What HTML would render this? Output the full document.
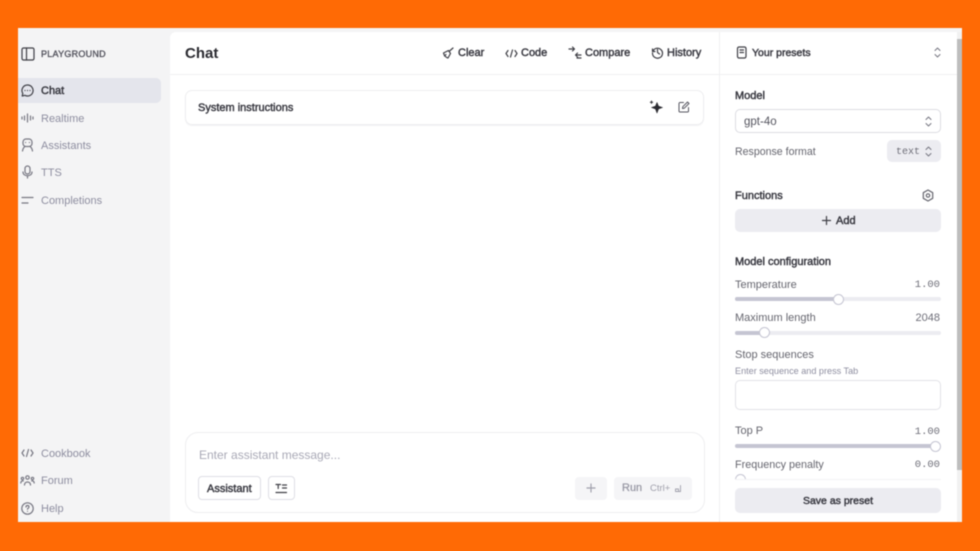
<!DOCTYPE html>
<html><head><meta charset="utf-8"><style>
html,body{margin:0;padding:0;width:980px;height:551px;overflow:hidden;background:#ff6a05}
*{box-sizing:border-box}
#f{position:absolute;left:0;top:0;width:980px;height:551px;font-family:"Liberation Sans",sans-serif;filter:blur(.4px)}
.a,.t,svg{position:absolute}
.t{white-space:nowrap;line-height:16px;height:16px;font-size:11px;color:#66666f;margin-top:1px}
.n{font-size:11px;color:#8e8ea0}
.b{color:#3a3a42;font-size:11px;-webkit-text-stroke:.45px #3a3a42}
.m{font-family:"Liberation Mono",monospace;font-size:10.5px;color:#6e6e78}
svg{fill:none;stroke:#55555f;stroke-width:1.2;stroke-linecap:round;stroke-linejoin:round}
.r{text-align:right}
.track{position:absolute;left:735px;width:206px;height:4px;border-radius:2px;background:#ececf1}
.fill{position:absolute;left:735px;height:4px;border-radius:2px;background:#c5c5d2}
.th{position:absolute;width:11px;height:11px;border-radius:50%;background:#fff;border:1.5px solid #c5c5d2}
</style></head><body><div id="f">
<div class="a" style="left:18px;top:28px;width:944px;height:494px;background:#f4f4f5"></div>
<div class="a" style="left:170px;top:32px;width:787px;height:490px;background:#fff;border-top-left-radius:6px"></div>
<div class="a" style="left:957px;top:32px;width:5px;height:490px;background:#f1f1f1"></div>
<div class="a" style="left:957px;top:39px;width:5px;height:431px;background:#bdbdbd"></div>
<div class="a" style="left:170px;top:74px;width:787px;height:1px;background:#f0f0f2"></div>
<div class="a" style="left:719px;top:32px;width:1px;height:490px;background:#efeff1"></div>

<!-- sidebar -->
<svg style="left:21px;top:47px" width="14" height="14" viewBox="0 0 14 14"><rect x="1" y="1" width="12" height="12" rx="1.5" stroke="#3f3f46"/><path d="M5.5 1v12" stroke="#3f3f46"/></svg>
<div class="t b" style="left:41px;top:45px;font-size:9px;letter-spacing:.25px;color:#55555f;-webkit-text-stroke:.35px #55555f">PLAYGROUND</div>
<div class="a" style="left:18px;top:78px;width:143px;height:25px;background:#e4e5ec;border-radius:0 5px 5px 0"></div>
<svg style="left:21px;top:84px" width="13" height="13" viewBox="0 0 13 13"><path d="M6.500 1a5.500 5.500 0 1 1-2.600 10.300L1.200 12l.6-2.600A5.500 5.500 0 0 1 6.500 1z" stroke="#3f3f46"/><path d="M4 6.500h.01M6.500 6.500h.01M9 6.500h.01" stroke="#3f3f46"/></svg>
<div class="t b" style="left:41px;top:82px">Chat</div>
<svg style="left:21px;top:112px" width="13" height="12" viewBox="0 0 13 12"><path d="M1 5v2M3.500 4v4M6.500 2v8M9.500 4v4M12 5v2" stroke="#777782"/></svg>
<div class="t n" style="left:41px;top:110px">Realtime</div>
<svg style="left:21px;top:138px" width="13" height="14" viewBox="0 0 13 14"><rect x="2" y="1" width="9" height="7.500" rx="3" stroke="#777782"/><path d="M4.600 4.500h.01M8.400 4.500h.01M1.500 13c.3-2.600 2-4.500 2.700-4.500M11.500 13c-.3-2.600-2-4.500-2.700-4.500" stroke="#777782"/></svg>
<div class="t n" style="left:41px;top:137px">Assistants</div>
<svg style="left:21px;top:165px" width="13" height="14" viewBox="0 0 13 14"><rect x="4" y="1" width="5" height="8" rx="2.500" stroke="#777782"/><path d="M2 7c0 5 9 5 9 0M6.500 11v2" stroke="#777782"/></svg>
<div class="t n" style="left:41px;top:164px">TTS</div>
<svg style="left:21px;top:196px" width="13" height="9" viewBox="0 0 13 9"><path d="M1 1.500h11M1 7h6" stroke="#777782"/></svg>
<div class="t n" style="left:41px;top:192px">Completions</div>
<svg style="left:21px;top:448px" width="13" height="10" viewBox="0 0 13 10"><path d="M3 2L1 5l2 3M10 2l2 3-2 3M7.500 1.500l-2 7" stroke="#777782"/></svg>
<div class="t n" style="left:41px;top:445px">Cookbook</div>
<svg style="left:20px;top:475px" width="15" height="11" viewBox="0 0 15 11"><circle cx="7.500" cy="2.500" r="1.700" stroke="#777782"/><circle cx="2.500" cy="3.500" r="1.200" stroke="#777782"/><circle cx="12.500" cy="3.500" r="1.200" stroke="#777782"/><path d="M4.500 10c0-4 6-4 6 0M.8 8c0-2 2-2.500 2.500-2M14.200 8c0-2-2-2.500-2.500-2" stroke="#777782"/></svg>
<div class="t n" style="left:41px;top:472px">Forum</div>
<svg style="left:21px;top:502px" width="13" height="13" viewBox="0 0 13 13"><circle cx="6.500" cy="6.500" r="5.700" stroke="#777782"/><path d="M5 5c0-2 3-2 3 0 0 1-1.500 1.200-1.500 2.200M6.500 9.300h.01" stroke="#777782"/></svg>
<div class="t n" style="left:41px;top:500px">Help</div>

<!-- header -->
<div class="t" style="left:185px;top:44px;height:18px;line-height:18px;font-size:15px;font-weight:bold;color:#2b2b31">Chat</div>
<svg style="left:442px;top:47px" width="12" height="12" viewBox="0 0 12 12"><path d="M11 1L7 4.500M1.500 6L6.500 3.500 8.500 6.500 6 11C4 10.500 2 8.500 1.500 6zM2.500 9L4 7.500" stroke="#3f3f46"/></svg>
<div class="t b" style="left:458px;top:44px">Clear</div>
<svg style="left:505px;top:49px" width="13" height="9" viewBox="0 0 13 9"><path d="M3 1.500L1 4.500l2 3M10 1.500l2 3-2 3M7.500 1L5.500 8" stroke="#3f3f46"/></svg>
<div class="t b" style="left:521px;top:44px">Code</div>
<svg style="left:568px;top:46px" width="14" height="13" viewBox="0 0 14 13"><path d="M1 3h5M4.500 1L6.500 3 4.500 5M13 9H8M9.500 7L7.500 9l2 2M9 12h4" stroke="#3f3f46"/></svg>
<div class="t b" style="left:585px;top:44px">Compare</div>
<svg style="left:651px;top:46px" width="13" height="13" viewBox="0 0 13 13"><path d="M1.500 3v2.500H4M1.800 5.500A5 5 0 1 1 1.500 7M6.500 3.500v3l2 1.500" stroke="#3f3f46"/></svg>
<div class="t b" style="left:667px;top:44px">History</div>

<!-- system instructions -->
<div class="a" style="left:185px;top:90px;width:519px;height:35px;border:1px solid #eeeef0;border-radius:7px;box-shadow:0 1px 1px #f2f2f4"></div>
<div class="t b" style="left:198px;top:99px">System instructions</div>
<svg style="left:649px;top:100px" width="14" height="14" viewBox="0 0 14 14"><path d="M8 2.500l1.500 3.600L13.500 7.500 9.500 9 8 13 6.500 9 2.500 7.500l4-1.400z" fill="#2b2b31" stroke="#2b2b31" stroke-width=".6"/><path d="M2.500 1v2.400M1.300 2.200h2.400" stroke="#2b2b31" stroke-width="1"/></svg>
<svg style="left:678px;top:101px" width="12" height="12" viewBox="0 0 12 12"><path d="M5.500 1.500H2a1 1 0 0 0-1 1V10a1 1 0 0 0 1 1h7.500a1 1 0 0 0 1-1V6.500M4.500 7.500l.3-1.800L9.500 1l1.500 1.500-4.700 4.700z" stroke="#55555f" stroke-width="1"/></svg>

<!-- composer -->
<div class="a" style="left:185px;top:432px;width:520px;height:81px;border:1px solid #eeeef0;border-radius:13px"></div>
<div class="t" style="left:199px;top:446px;font-size:12px;color:#a9a9b6">Enter assistant message...</div>
<div class="a" style="left:198px;top:476px;width:63px;height:24px;border:1px solid #dfdfe5;border-radius:4px;background:#fff"></div>
<div class="t b" style="left:207px;top:480px">Assistant</div>
<div class="a" style="left:268px;top:476px;width:27px;height:24px;border:1px solid #dfdfe5;border-radius:4px;background:#fff"></div>
<svg style="left:275px;top:483px" width="13" height="11" viewBox="0 0 13 11"><path d="M1 1.500h4.500M3.200 1.500v4M7.500 2h4M7.500 5h4M1 9.500h10.500" stroke="#3f3f46"/></svg>
<div class="a" style="left:575px;top:477px;width:32px;height:23px;background:#f5f5f7;border-radius:4px"></div>
<svg style="left:586px;top:483px" width="10" height="10" viewBox="0 0 10 10"><path d="M5 1v8M1 5h8" stroke="#a0a0ac"/></svg>
<div class="a" style="left:614px;top:477px;width:78px;height:23px;background:#f5f5f7;border-radius:4px"></div>
<div class="t" style="left:622px;top:479px;color:#9a9aa6;-webkit-text-stroke:.3px #9a9aa6">Run</div>
<div class="t" style="left:650px;top:480px;font-size:9.500px;color:#a0a0ac">Ctrl+</div>
<svg style="left:674px;top:485px" width="8" height="8" viewBox="0 0 8 8"><path d="M6.500 .5v6h-5V4h3v2.500" stroke="#a0a0ac" stroke-width=".9"/></svg>

<!-- right panel -->
<svg style="left:736px;top:46px" width="11" height="13" viewBox="0 0 11 13"><rect x="1.500" y="1" width="8.500" height="11" rx="1.500" stroke="#3f3f46"/><path d="M4 4h3.500M4 6.500h3.500" stroke="#3f3f46"/></svg>
<div class="t b" style="left:752px;top:44px;font-size:10.500px">Your presets</div>
<svg style="left:934px;top:47px" width="7" height="11" viewBox="0 0 7 11"><path d="M1 3.500L3.500 1 6 3.500M1 7.500L3.500 10 6 7.500" stroke="#777782" stroke-width="1"/></svg>
<div class="t b" style="left:735px;top:87px">Model</div>
<div class="a" style="left:735px;top:109px;width:206px;height:24px;border:1px solid #dcdce2;border-radius:5px;background:#fff"></div>
<div class="t" style="left:744px;top:113px;font-size:11.500px;color:#55555f">gpt-4o</div>
<svg style="left:925px;top:116px" width="7" height="11" viewBox="0 0 7 11"><path d="M1 3.500L3.500 1 6 3.500M1 7.500L3.500 10 6 7.500" stroke="#777782" stroke-width="1"/></svg>
<div class="t" style="left:735px;top:143px;font-size:10.600px">Response format</div>
<div class="a" style="left:887px;top:140px;width:54px;height:22px;background:#ececf1;border-radius:5px"></div>
<div class="t m" style="left:896px;top:144px;font-size:10px">text</div>
<svg style="left:925px;top:146px" width="7" height="11" viewBox="0 0 7 11"><path d="M1 3.500L3.500 1 6 3.500M1 7.500L3.500 10 6 7.500" stroke="#777782" stroke-width="1"/></svg>
<div class="t b" style="left:735px;top:187px">Functions</div>
<svg style="left:922px;top:189px" width="12" height="13" viewBox="0 0 12 13"><path d="M6 1l4.700 2.700v5.600L6 12 1.300 9.300V3.700z" stroke="#66666f"/><circle cx="6" cy="6.500" r="1.700" stroke="#66666f"/></svg>
<div class="a" style="left:735px;top:209px;width:206px;height:23px;background:#ececf1;border-radius:5px"></div>
<svg style="left:821px;top:215px" width="11" height="11" viewBox="0 0 11 11"><path d="M5.500 1.500v8M1.500 5.500h8" stroke="#3f3f46"/></svg>
<div class="t b" style="left:836px;top:212px">Add</div>
<div class="t b" style="left:735px;top:253px">Model configuration</div>
<div class="t" style="left:735px;top:276px">Temperature</div>
<div class="t m r" style="left:889px;top:276px;width:51px">1.00</div>
<div class="track" style="top:297px"></div><div class="fill" style="top:297px;width:103px"></div><div class="th" style="left:833px;top:294px"></div>
<div class="t" style="left:735px;top:309px">Maximum length</div>
<div class="t r" style="left:889px;top:309px;width:51px;color:#6e6e78">2048</div>
<div class="track" style="top:331px"></div><div class="fill" style="top:331px;width:30px"></div><div class="th" style="left:759px;top:327px"></div>
<div class="t" style="left:735px;top:346px">Stop sequences</div>
<div class="t" style="left:735px;top:362px;font-size:9.100px;color:#8e8ea0">Enter sequence and press Tab</div>
<div class="a" style="left:735px;top:380px;width:206px;height:30px;border:1px solid #e2e2e7;border-radius:5px;background:#fff"></div>
<div class="t" style="left:735px;top:422px">Top P</div>
<div class="t m r" style="left:889px;top:423px;width:51px">1.00</div>
<div class="fill" style="top:444px;width:200px"></div><div class="th" style="left:930px;top:441px"></div>
<div class="t" style="left:735px;top:456px;font-size:10.800px">Frequency penalty</div>
<div class="t m r" style="left:889px;top:456px;width:51px">0.00</div>
<div class="a" style="left:735px;top:474px;width:11px;height:5px;overflow:hidden"><div class="th" style="left:0;top:0"></div></div>
<div class="a" style="left:735px;top:479px;width:206px;height:1px;background:#f3f3f5"></div>
<div class="a" style="left:735px;top:488px;width:206px;height:25px;background:#ececf1;border-radius:5px"></div>
<div class="t b" style="left:735px;top:492px;width:206px;text-align:center;font-size:10.500px">Save as preset</div>
</div></body></html>
